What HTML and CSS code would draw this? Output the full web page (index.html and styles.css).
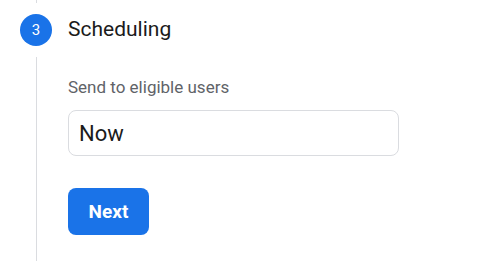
FILE: index.html
```html
<!DOCTYPE html>
<html>
<head>
<meta charset="utf-8">
<link rel="stylesheet" href="styles.css">
</head>
<body>
<div class="step">
  <div class="rail">
    <div class="line line-top"></div>
    <div class="num">3</div>
    <div class="line line-bottom"></div>
  </div>
  <div class="content">
    <div class="title">Scheduling</div>
    <div class="label">Send to eligible users</div>
    <div class="field">Now</div>
    <button class="next">Next</button>
  </div>
</div>
</body>
</html>
```

FILE: styles.css
```css
html, body {
  margin: 0;
  padding: 0;
  background: #ffffff;
  font-family: Roboto, "Liberation Sans", sans-serif;
}
.step {
  display: flex;
  height: 261px;
  padding-left: 20px;
}
.rail {
  width: 32px;
  display: flex;
  flex-direction: column;
  align-items: center;
}
.line {
  width: 1px;
  background: #dadce0;
}
.line-top {
  height: 3px;
  margin-bottom: 11px;
}
.line-bottom {
  flex: 1;
  margin-top: 11px;
}
.num {
  width: 32px;
  height: 32px;
  border-radius: 50%;
  background: #1a73e8;
  color: #ffffff;
  font-size: 15px;
  display: flex;
  align-items: center;
  justify-content: center;
}
.content {
  padding-left: 16px;
  padding-top: 17px;
  display: flex;
  flex-direction: column;
  align-items: flex-start;
}
.title {
  font-size: 21px;
  color: #1b1b1b;
  line-height: 24px;
}
.label {
  margin-top: 36px;
  font-size: 17px;
  color: #5f6368;
  line-height: 20px;
}
.field {
  margin-top: 13px;
  box-sizing: border-box;
  width: 331px;
  height: 46px;
  border: 1px solid #dadce0;
  border-radius: 8px;
  padding-left: 10px;
  display: flex;
  align-items: center;
  font-size: 22px;
  color: #1b1b1b;
}
.next {
  margin-top: 32px;
  width: 81px;
  height: 47px;
  border: none;
  border-radius: 8px;
  background: #1a73e8;
  color: #ffffff;
  font-family: Roboto, "Liberation Sans", sans-serif;
  font-weight: 700;
  font-size: 19px;
  padding: 0;
}
```
